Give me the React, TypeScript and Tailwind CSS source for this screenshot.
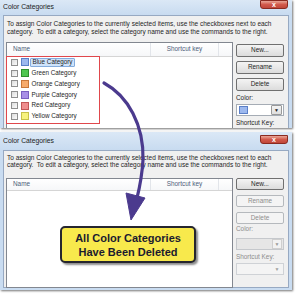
import React from "react";

const cats = [
  { name: "Blue Category", bg: "bg-[#9cb8ee]", bd: "border-[#5b7fc7]", sel: true },
  { name: "Green Category", bg: "bg-[#4fc650]", bd: "border-[#2d8f2d]" },
  { name: "Orange Category", bg: "bg-[#f7ab6c]", bd: "border-[#c9783a]" },
  { name: "Purple Category", bg: "bg-[#a98fe6]", bd: "border-[#7a5fc0]" },
  { name: "Red Category", bg: "bg-[#ef8d8d]", bd: "border-[#c25656]" },
  { name: "Yellow Category", bg: "bg-[#f7f37e]", bd: "border-[#c8c24a]" },
];

function Close({ top }: { top: string }) {
  return (
    <div
      className={`absolute left-[260px] ${top} w-[28px] h-[9px] rounded-b-[3px] border border-[#8a2a20] bg-linear-to-b from-[#e8a597] via-[#d2594b] to-[#c0473a] flex items-center justify-center text-white text-[7px] font-bold leading-none`}
    >
      x
    </div>
  );
}

function Btn({ label, disabled, h }: { label: string; disabled?: boolean; h: string }) {
  return (
    <div
      className={`${h} w-[48px] rounded-[2px] border flex items-center justify-center text-[6.4px] leading-none ${
        disabled
          ? "border-[#b5b9bd] bg-[#f4f4f4] text-[#8d8d8d]"
          : "border-[#707070] bg-linear-to-b from-[#f4f4f4] to-[#dcdcdc] text-[#1e1e1e]"
      }`}
    >
      {label}
    </div>
  );
}

function Header({ h }: { h: string }) {
  return (
    <div className={`${h} flex border-b border-[#d5d5d5] bg-linear-to-b from-white to-[#f6f7f9] text-[6.4px] text-[#4c607a] leading-none shrink-0`}>
      <div className="w-[144px] border-r border-[#e2e5ea] flex items-center pl-[6px]">Name</div>
      <div className="w-[68px] border-r border-[#e2e5ea] flex items-center justify-center">Shortcut key</div>
      <div className="flex-1" />
    </div>
  );
}

function Desc({ lead }: { lead: string }) {
  return (
    <div className={`pl-[2px] text-[6.5px] ${lead} text-[#1e1e1e] whitespace-nowrap`}>
      <div>To assign Color Categories to the currently selected items, use the checkboxes next to each</div>
      <div>category.&nbsp; To edit a category, select the category name and use the commands to the right.</div>
    </div>
  );
}

function TopWindow() {
  return (
    <div className="relative w-[292px] h-[128px] bg-[#c9dcf1] shadow-[1px_1px_2px_rgba(0,0,0,0.55)] shrink-0">
      <div className="h-[15px] bg-linear-to-b from-[#dbe8f6] to-[#c8dbf0] flex items-center pl-[3px] text-[6.8px] text-[#222]">
        Color Categories
      </div>
      <Close top="top-0" />
      <div className="ml-[3px] w-[286px] h-[113px] border-t border-x border-[#97a9c2] bg-[#f0f0f0] pl-px flex flex-col">
        <div className="mt-[4px]">
          <Desc lead="leading-[8px]" />
        </div>
        <div className="mt-[6px] flex gap-[3px] flex-1 min-h-0">
          <div className="w-[227px] border-x border-t border-[#828790] bg-white flex flex-col ml-px">
            <Header h="h-[14px]" />
            <div className="-mt-px -ml-px w-[94px] h-[68px] border-[1.5px] border-[#e0474c] flex flex-col">
              {cats.map((c) => (
                <div key={c.name} className="h-[10.8px] flex items-center text-[6.3px] text-[#1e1e1e] leading-none">
                  <div className="ml-[3.5px] w-[7px] h-[7px] border border-[#8f8f8f] bg-linear-to-br from-[#dcdcdc] to-[#fbfbfb]" />
                  <div className={`ml-[3px] w-[8px] h-[8px] border ${c.bd} ${c.bg}`} />
                  {c.sel ? (
                    <div className="ml-[1.5px] px-[1.5px] h-[9px] flex items-center bg-[#cfe3fa] border border-[#84acdd] rounded-[1px]">
                      {c.name}
                    </div>
                  ) : (
                    <div className="ml-[3px]">{c.name}</div>
                  )}
                </div>
              ))}
            </div>
          </div>
          <div className="w-[48px] pt-[2px] flex flex-col">
            <Btn label="New..." h="h-[13px]" />
            <div className="mt-[4px]"><Btn label="Rename" h="h-[13px]" /></div>
            <div className="mt-[4px]"><Btn label="Delete" h="h-[13px]" /></div>
            <div className="mt-[3px] text-[6.4px] leading-[8px] text-[#1e1e1e]">Color:</div>
            <div className="mt-[2px] h-[12px] border border-[#a5acb5] bg-white flex items-center">
              <div className="ml-[2px] w-[9px] h-[8px] bg-[#9cb8ee] border border-[#5b7fc7]" />
              <div className="flex-1" />
              <div className="w-[11px] h-[10px] mr-px border border-[#9a9a9a] rounded-[1px] bg-linear-to-b from-[#f4f4f4] to-[#dedede] flex items-center justify-center text-[5px] text-[#222] leading-none">
                ▼
              </div>
            </div>
            <div className="mt-[3px] text-[6.4px] leading-[8px] text-[#1e1e1e] whitespace-nowrap">Shortcut Key:</div>
          </div>
        </div>
      </div>
    </div>
  );
}

function BottomWindow() {
  return (
    <div className="relative w-[292px] h-[158px] bg-[#c9dcf1] shadow-[1px_1px_2px_rgba(0,0,0,0.55)] shrink-0">
      <div className="h-[18px] bg-linear-to-b from-[#dbe8f6] to-[#c8dbf0] flex items-center pl-[3px] text-[6.8px] text-[#222]">
        Color Categories
      </div>
      <Close top="top-[3px]" />
      <div className="ml-[3px] w-[286px] h-[138px] border border-[#97a9c2] bg-[#f0f0f0] pl-px flex flex-col">
        <div className="mt-[3px]">
          <Desc lead="leading-[7px]" />
        </div>
        <div className="mt-[10px] flex gap-[3px]">
          <div className="w-[227px] h-[110px] border border-[#828790] bg-white flex flex-col ml-px">
            <Header h="h-[12px]" />
          </div>
          <div className="w-[48px] flex flex-col">
            <Btn label="New..." h="h-[12px]" />
            <div className="mt-[5px]"><Btn label="Rename" disabled h="h-[12px]" /></div>
            <div className="mt-[5px]"><Btn label="Delete" disabled h="h-[12px]" /></div>
            <div className="mt-[1px] text-[6.4px] leading-[8px] text-[#8d8d8d]">Color:</div>
            <div className="mt-[5px] h-[12px] border border-[#c5c8cc] bg-[#e6e6e6] flex items-center justify-end">
              <div className="w-[10px] h-[10px] mr-px border border-[#cfcfcf] bg-[#f2f2f2] flex items-center justify-center text-[5px] text-[#9a9a9a] leading-none">
                ▼
              </div>
            </div>
            <div className="mt-[3px] text-[6.4px] leading-[8px] text-[#8d8d8d] whitespace-nowrap">Shortcut Key:</div>
            <div className="mt-[2px] h-[12px] border border-[#cfd2d6] bg-[#f4f4f4] flex items-center justify-end">
              <div className="w-[10px] h-[10px] mr-px flex items-center justify-center text-[5px] text-[#a0a0a0] leading-none">
                ▼
              </div>
            </div>
          </div>
        </div>
      </div>
    </div>
  );
}

export default function App() {
  return (
    <div className="relative w-[300px] h-[298px] bg-white overflow-hidden font-['Liberation_Sans',Arial,sans-serif] flex flex-col">
      <TopWindow />
      <div className="h-[4px] shrink-0" />
      <BottomWindow />
      <svg className="absolute left-0 top-0 pointer-events-none" width="300" height="298" viewBox="0 0 300 298">
        <path
          d="M104 83 C128 96 144 125 143 160 C142 176 140 186 137 198"
          fill="none"
          stroke="#4b3a8e"
          strokeWidth="3.2"
          strokeLinecap="round"
        />
        <polygon points="126,193 145,198 131,220" fill="#4b3a8e" stroke="#4b3a8e" strokeWidth="1" strokeLinejoin="round" />
      </svg>
      <div className="absolute left-[60px] top-[226px] w-[136px] h-[37px] rounded-[5px] border-2 border-[#26262e] bg-[#f8e94c] shadow-[2px_2px_2px_rgba(0,0,0,0.45)] flex flex-col items-center justify-center text-[11px] leading-[14px] font-bold text-[#1b1b2f]">
        <div>All Color Categories</div>
        <div>Have Been Deleted</div>
      </div>
    </div>
  );
}
